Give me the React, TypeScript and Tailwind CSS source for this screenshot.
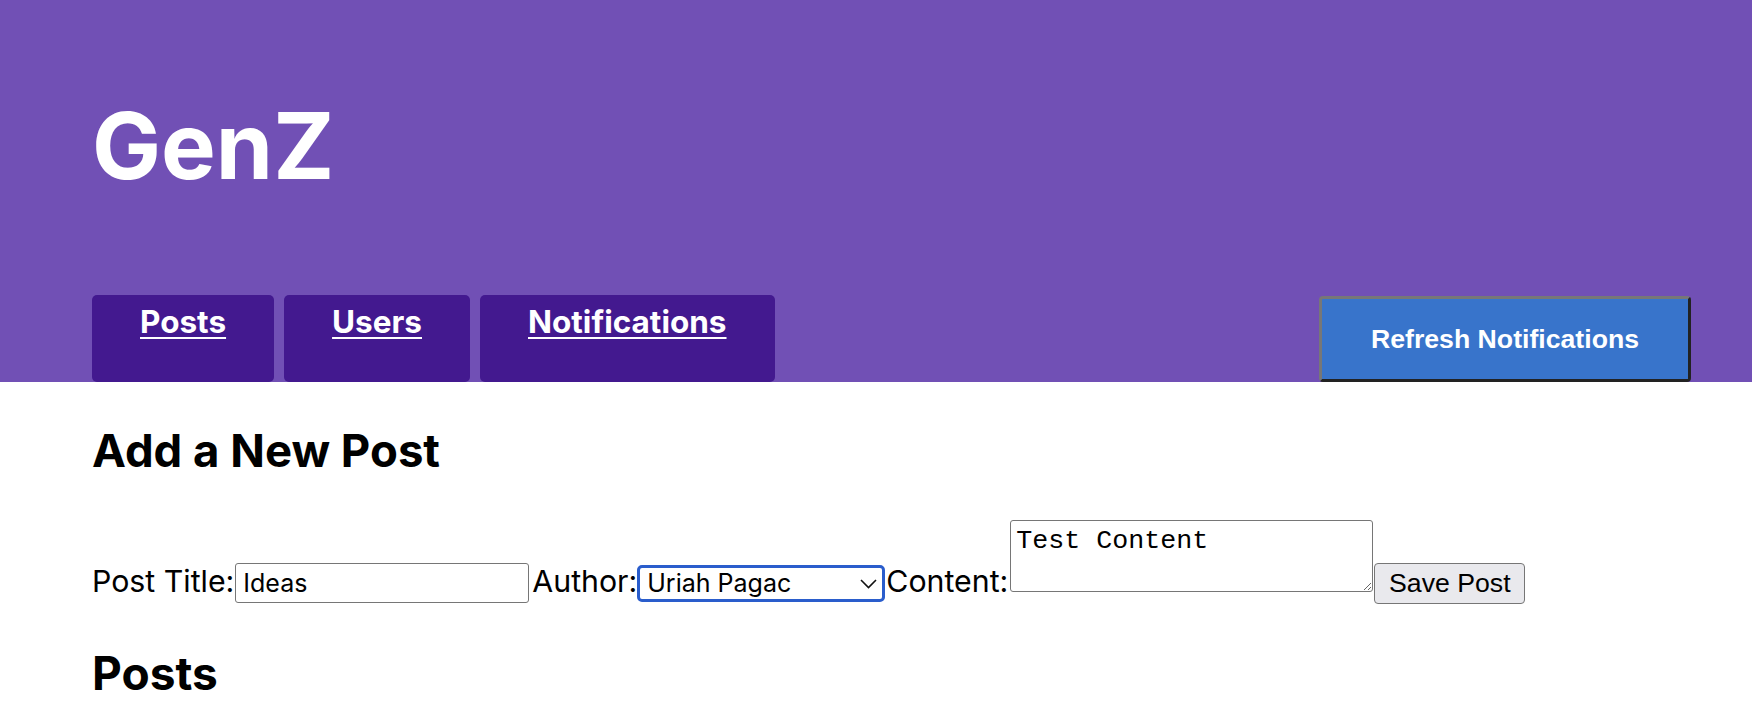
import React from 'react';

const navLinks = ['Posts', 'Users', 'Notifications'];

const App: React.FC = () => {
  return (
    <div className="min-h-screen bg-white font-['Inter',sans-serif] text-black">
      <header className="bg-[#7150b5] pl-[92px] pr-[61px] pt-[91px]">
        <h1 className="text-[92px] font-bold leading-[1.2] text-white">GenZ</h1>
        <nav className="mt-[94px] flex items-end justify-between">
          <div className="flex gap-[10px]">
            {navLinks.map((link) => (
              <div
                key={link}
                className="h-[87px] rounded-[5px] bg-[#43198f] px-[48px] pt-[8px] text-center text-[31.5px] leading-[1.21]"
              >
                <a href="#" className="font-bold text-white underline decoration-2 underline-offset-[4px]">
                  {link}
                </a>
              </div>
            ))}
          </div>
          <button className="h-[86px] w-[372px] rounded-[4px] border-[3px] border-t-[#777777] border-l-[#777777] border-r-[#222222] border-b-[#222222] bg-[#3874cb] font-['Liberation_Sans',Arial,sans-serif] text-[26.67px] font-bold text-white">
            Refresh Notifications
          </button>
        </nav>
      </header>

      <main className="px-[92px]">
        <section>
          <h2 className="mt-[41px] text-[45.5px] font-bold leading-[1.21]">Add a New Post</h2>
          <form className="mt-[42px] text-[30.3px] leading-[1.21]">
            <label htmlFor="postTitle">Post Title:</label>
            <input
              id="postTitle"
              type="text"
              defaultValue="Ideas"
              className="ml-[1px] h-[40px] w-[294px] rounded-[3px] border border-[#767676] px-[7px] align-baseline text-[25px]"
            />
            <label htmlFor="postAuthor" className="ml-[3px]">Author:</label>
            <span className="relative inline-block align-baseline">
              <select
                id="postAuthor"
                defaultValue="1"
                className="h-[37px] w-[248px] appearance-none rounded-[5px] border-[3px] border-[#2a5dcc] bg-white pl-[7px] text-[25px] outline-none"
              >
                <option value="1">Uriah Pagac</option>
              </select>
              <svg
                className="pointer-events-none absolute right-[8px] top-[16px]"
                width="17"
                height="10"
                viewBox="0 0 17 10"
                fill="none"
                stroke="#111"
                strokeWidth="1.6"
              >
                <path d="M1 1l7.5 7.5L16 1" />
              </svg>
            </span>
            <label htmlFor="postContent" className="ml-[1px]">Content:</label>
            <textarea
              id="postContent"
              defaultValue="Test Content"
              className="ml-[2px] h-[72px] w-[363px] rounded-[3px] border border-[#767676] px-[5px] pt-[5px] align-baseline font-['Liberation_Mono','Courier_New',monospace] text-[26.67px] leading-[1.133]"
            />
            <button
              type="button"
              className="ml-[1px] h-[41px] w-[151px] rounded-[4px] border border-[#767676] bg-[#e9e9ed] align-baseline font-['Liberation_Sans',Arial,sans-serif] text-[26.67px]"
            >
              Save Post
            </button>
          </form>
        </section>
        <section>
          <h2 className="mt-[42px] text-[46px] font-bold leading-[1.21]">Posts</h2>
        </section>
      </main>
    </div>
  );
};

export default App;
